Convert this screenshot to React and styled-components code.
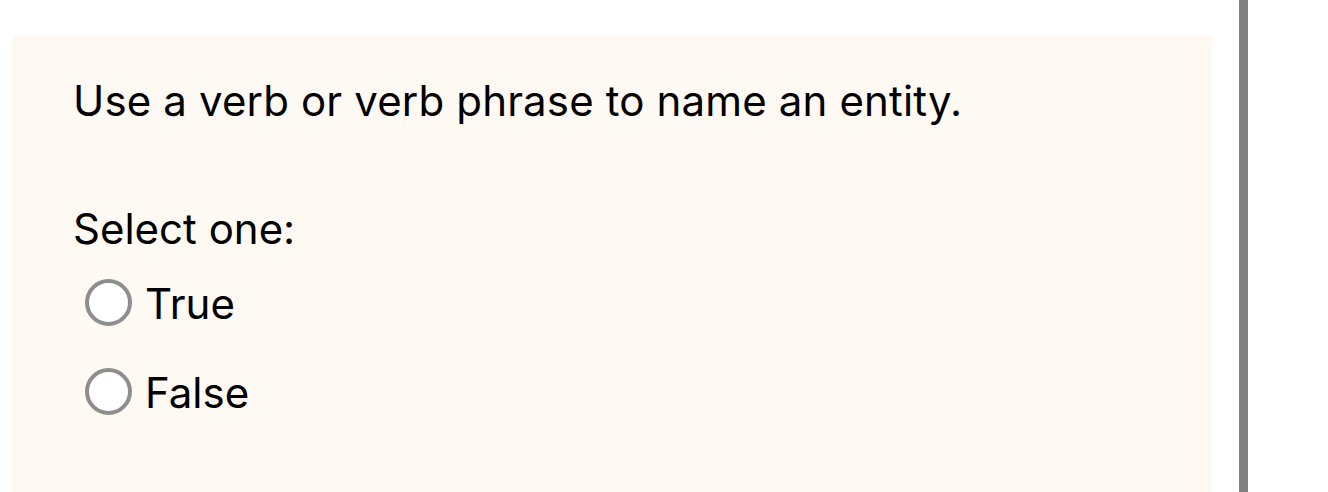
import React from 'react';
import styled, { createGlobalStyle } from 'styled-components';

const GlobalStyle = createGlobalStyle`
  html, body {
    margin: 0;
    padding: 0;
    background: #ffffff;
  }
  body {
    font-family: Inter, 'Liberation Sans', Arial, sans-serif;
    color: #000;
  }
`;

const Page = styled.div`
  display: flex;
  align-items: stretch;
  height: 492px;
  overflow: hidden;
`;

const Formulation = styled.div`
  box-sizing: border-box;
  margin: 36px 0 0 12px;
  width: 1200px;
  flex: none;
  background: #fef9f2;
  padding: 37px 61px 0;
`;

const Divider = styled.div`
  flex: none;
  width: 9px;
  margin-left: 27px;
  background: #808080;
`;

const QText = styled.p`
  margin: 0;
  font-size: 42px;
  line-height: 56px;
  letter-spacing: 0.15px;
`;

const Prompt = styled.div`
  margin-top: 72px;
  font-size: 42px;
  line-height: 56px;
`;

const Answers = styled.div`
  display: flex;
  flex-direction: column;
  gap: 41px;
  margin-top: 22px;
  padding-left: 12px;
`;

const Option = styled.label`
  display: flex;
  align-items: flex-start;
  gap: 13px;
  font-size: 42px;
  line-height: 47px;
`;

const OptionText = styled.span`
  margin-top: 1px;
`;

const Radio = styled.span`
  box-sizing: border-box;
  width: 47px;
  height: 47px;
  border-radius: 50%;
  border: 4px solid #8e8e8e;
  background: #ffffff;
  flex: none;
`;

const options = ['True', 'False'];

export default function App() {
  return (
    <>
      <GlobalStyle />
      <Page>
        <Formulation>
          <QText>Use a verb or verb phrase to name an entity.</QText>
          <Prompt>Select one:</Prompt>
          <Answers>
            {options.map((o) => (
              <Option key={o}>
                <Radio />
                <OptionText>{o}</OptionText>
              </Option>
            ))}
          </Answers>
        </Formulation>
        <Divider />
      </Page>
    </>
  );
}
